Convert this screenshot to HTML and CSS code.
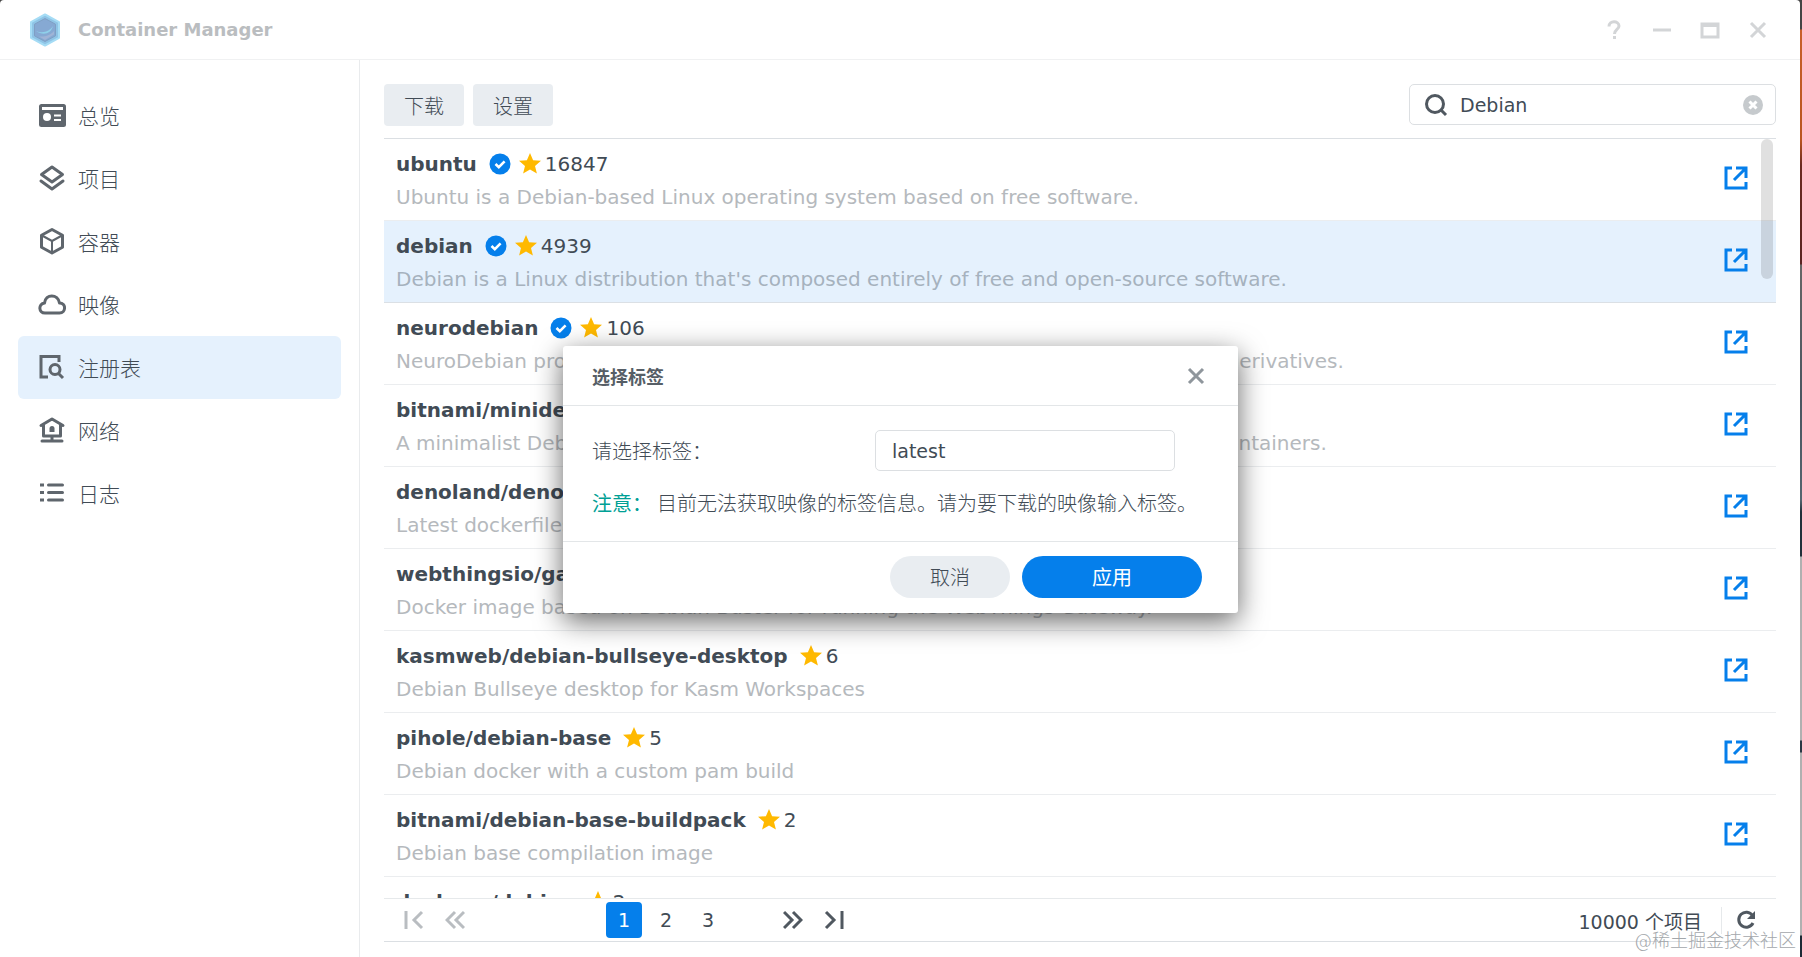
FILE: index.html
```html
<!DOCTYPE html>
<html lang="zh-CN">

<head>
    <meta charset="UTF-8">
    <meta name="viewport" content="width=device-width, initial-scale=1.0">
    <title>Container Manager</title>
    <link rel="stylesheet" href="styles.css">
</head>

<body>

    <!-- Shared icons -->
    <svg class="sprite" aria-hidden="true">
        <symbol id="verified" viewBox="0 0 22 22">
            <circle cx="11" cy="11" r="10.5" fill="#057feb" />
            <path d="M6.5 11l3.3 3.2 5.8-5.8" fill="none" stroke="#fff" stroke-width="2.6" />
        </symbol>
        <symbol id="star" viewBox="0 0 22 22">
            <path d="M11 0l3.1 7.2 7.9.6-6 5.1 1.9 7.6L11 16.600l-6.900 3.900L6 12.900 0 7.800l7.900-.6z" fill="#ffb900" />
        </symbol>
        <symbol id="open" viewBox="0 0 24 24">
            <path d="M8 2H2v20h20v-6M12 2h10v10M21 3L10 14" fill="none" stroke="#057feb" stroke-width="3" />
        </symbol>
    </svg>

    <div class="window">
        <header class="titlebar">
            <svg class="logo" viewBox="0 0 32 34">
                <path d="M16 1.500l14 7.700v15.600l-14 7.700L2 24.800V9.200z" fill="#8fc4e6" stroke="#a5dcf5" stroke-width="2" stroke-linejoin="round" />
                <path d="M16 5.500l10.500 5.700v11.600L16 28.500 5.500 22.800V11.200z" fill="#86a9d3" stroke="#7f9fc4" />
                <path d="M7 18c7 3 14 0 17-5-2 8-10 10-17 5z" fill="#8fd0ea" />
                <path d="M10 23.500c7 .5 12-2 15-5.500v3.500l-9 5.500z" fill="#a0b4d6" />
            </svg>
            <h1>Container Manager</h1>
            <div class="window-tools">
                <button aria-label="帮助"><svg viewBox="0 0 20 20"><path d="M5 6.500C5 0 15 .5 15 6c0 3.500-4.500 3.500-4.500 8M10.500 16v3" /></svg></button>
                <button aria-label="最小化"><svg viewBox="0 0 20 20"><path d="M1 10h18" /></svg></button>
                <button aria-label="最大化"><svg viewBox="0 0 20 20"><path d="M2 4h16v13H2zM2 5.500h16" /></svg></button>
                <button aria-label="关闭"><svg viewBox="0 0 20 20"><path d="M3 3l14 14M17 3L3 17" /></svg></button>
            </div>
        </header>

        <div class="body">
            <nav class="sidebar">
                <a href="#"><svg viewBox="0 0 28 28"><rect x="1" y="3" width="27" height="23" rx="2.500" fill="#5f666d" /><path d="M4 7.500h21" stroke="#fff" stroke-width="3" /><circle cx="9" cy="16" r="4" fill="#fff" /><path d="M16 14.500h7M16 19h7" stroke="#fff" stroke-width="2" /></svg>总览</a>
                <a href="#"><svg viewBox="0 0 28 28"><path d="M14 3l10.500 7.500L14 18 3.500 10.500zM3 17l11 8 11-8" class="line" /></svg>项目</a>
                <a href="#"><svg viewBox="0 0 28 28"><path d="M14 2.500l10.500 5.700v12L14 26 3.500 20.200v-12z" class="line" /><path d="M4 8.500l10 5.500 10-5.500M14 14v12" class="line thin" /></svg>容器</a>
                <a href="#"><svg viewBox="0 0 28 28"><path d="M7 23c-6.500 0-7-9-.5-10C7.500 3.500 20 3.500 21.500 13c7 0 6.500 10 0 10z" class="line" /></svg>映像</a>
                <a href="#" class="active"><svg viewBox="0 0 28 28"><path d="M10 24H3V3.500h18V9" class="line sharp" /><circle cx="17" cy="16.500" r="5" class="line" /><path d="M20.500 20.500l4.500 4.500" class="line sharp" /></svg>注册表</a>
                <a href="#"><svg viewBox="0 0 28 28"><path d="M3 9.500L14 3l11 6.500M5.500 9v11h17V9M14 20v5M4 25h20" class="line" /><path d="M11.500 16v-3.500a2.500 2.500 0 0 1 5 0V16z" fill="#5f666d" /></svg>网络</a>
                <a href="#"><svg viewBox="0 0 28 28"><path d="M2 6h4M2 13.500h4M2 21h4" class="line sharp" /><path d="M10.500 6h14M10.500 13.500h14M10.500 21h14" class="line" /></svg>日志</a>
            </nav>

            <main class="content">
                <div class="toolbar">
                    <button class="btn">下载</button>
                    <button class="btn">设置</button>
                    <div class="search">
                        <svg viewBox="0 0 24 24"><circle cx="11" cy="11" r="8.500" /><path d="M17 17l5 5" /></svg>
                        <input type="text" aria-label="搜索" value="Debian">
                        <button aria-label="清除"><svg viewBox="0 0 20 20"><circle cx="10" cy="10" r="10" stroke="none" /><path d="M6.500 6.500l7 7M13.500 6.500l-7 7" stroke="#fff" stroke-width="3" /></svg></button>
                    </div>
                </div>

                <div class="list-wrap">
                    <ul class="list">
                        <li>
                            <div class="info">
                                <h2>ubuntu <svg><use href="#verified" /></svg><svg><use href="#star" /></svg><span>16847</span></h2>
                                <p>Ubuntu is a Debian-based Linux operating system based on free software.</p>
                            </div>
                            <a href="#" aria-label="ubuntu"><svg><use href="#open" /></svg></a>
                        </li>
                        <li class="selected">
                            <div class="info">
                                <h2>debian <svg><use href="#verified" /></svg><svg><use href="#star" /></svg><span>4939</span></h2>
                                <p>Debian is a Linux distribution that's composed entirely of free and open-source software.</p>
                            </div>
                            <a href="#" aria-label="debian"><svg><use href="#open" /></svg></a>
                        </li>
                        <li>
                            <div class="info">
                                <h2>neurodebian <svg><use href="#verified" /></svg><svg><use href="#star" /></svg><span>106</span></h2>
                                <p>NeuroDebian provides neuroscience research software for Debian, Ubuntu, and all derivatives.</p>
                            </div>
                            <a href="#" aria-label="neurodebian"><svg><use href="#open" /></svg></a>
                        </li>
                        <li>
                            <div class="info">
                                <h2>bitnami/minideb</h2>
                                <p>A minimalist Debian-based image built specifically to be used as a base image in containers.</p>
                            </div>
                            <a href="#" aria-label="bitnami/minideb"><svg><use href="#open" /></svg></a>
                        </li>
                        <li>
                            <div class="info">
                                <h2>denoland/deno</h2>
                                <p>Latest dockerfiles and images for Deno</p>
                            </div>
                            <a href="#" aria-label="denoland/deno"><svg><use href="#open" /></svg></a>
                        </li>
                        <li>
                            <div class="info">
                                <h2>webthingsio/gateway</h2>
                                <p>Docker image based on Debian Buster for running the WebThings Gateway.</p>
                            </div>
                            <a href="#" aria-label="webthingsio/gateway"><svg><use href="#open" /></svg></a>
                        </li>
                        <li>
                            <div class="info">
                                <h2>kasmweb/debian-bullseye-desktop <svg><use href="#star" /></svg><span>6</span></h2>
                                <p>Debian Bullseye desktop for Kasm Workspaces</p>
                            </div>
                            <a href="#" aria-label="kasmweb/debian-bullseye-desktop"><svg><use href="#open" /></svg></a>
                        </li>
                        <li>
                            <div class="info">
                                <h2>pihole/debian-base <svg><use href="#star" /></svg><span>5</span></h2>
                                <p>Debian docker with a custom pam build</p>
                            </div>
                            <a href="#" aria-label="pihole/debian-base"><svg><use href="#open" /></svg></a>
                        </li>
                        <li>
                            <div class="info">
                                <h2>bitnami/debian-base-buildpack <svg><use href="#star" /></svg><span>2</span></h2>
                                <p>Debian base compilation image</p>
                            </div>
                            <a href="#" aria-label="bitnami/debian-base-buildpack"><svg><use href="#open" /></svg></a>
                        </li>
                        <li>
                            <div class="info">
                                <h2>dockage/debian <svg><use href="#star" /></svg><span>2</span></h2>
                            </div>
                        </li>
                    </ul>
                    <div class="scroll-thumb"></div>
                </div>

                <footer class="pager">
                    <button class="off" aria-label="第一页"><svg viewBox="0 0 20 20"><path d="M2 1v18M18 2l-8 8 8 8" /></svg></button>
                    <button class="off" aria-label="上一页"><svg viewBox="0 0 20 20"><path d="M10 2l-8 8 8 8M19 2l-8 8 8 8" /></svg></button>
                    <div class="pages">
                        <button class="current">1</button>
                        <button>2</button>
                        <button>3</button>
                    </div>
                    <button aria-label="下一页"><svg viewBox="0 0 20 20"><path d="M1 2l8 8-8 8M10 2l8 8-8 8" /></svg></button>
                    <button aria-label="最后一页"><svg viewBox="0 0 20 20"><path d="M2 2l8 8-8 8M18 1v18" /></svg></button>
                    <span class="total">10000 个项目</span>
                    <button class="refresh" aria-label="刷新"><svg viewBox="0 0 20 20"><path d="M16.500 5.500A7.500 7.500 0 1 0 17 13" /><path d="M19 1v8h-8z" class="head" /></svg></button>
                </footer>
            </main>
        </div>
    </div>

    <div class="dialog" role="dialog" aria-labelledby="dialog-title">
        <div class="dialog-head">
            <h2 id="dialog-title">选择标签</h2>
            <button aria-label="关闭"><svg viewBox="0 0 20 20"><path d="M3 3l14 14M17 3L3 17" /></svg></button>
        </div>
        <div class="dialog-body">
            <div class="field">
                <label for="tag">请选择标签：</label>
                <input type="text" id="tag" value="latest">
            </div>
            <p><span class="note">注意：</span>目前无法获取映像的标签信息。请为要下载的映像输入标签。</p>
        </div>
        <div class="dialog-foot">
            <button class="cancel">取消</button>
            <button class="apply">应用</button>
        </div>
    </div>

    <div class="watermark">@稀土掘金技术社区</div>

</body>

</html>
```
FILE: styles.css
```css
* {
    box-sizing: border-box;
}

body {
    margin: 0;
    font-family: "DejaVu Sans", "Noto Sans CJK SC", sans-serif;
    font-size: 19px;
    color: #414b55;
    background: linear-gradient(#444 29px, #c8602a 30px, #b9551f 140px, #6b2a20 165px, #5a2422 264px, #666 265px, #4a5560 400px, #55656f 500px, #22303a 512px, #22303a 556px, #b0b0b0 557px, #b0b0b0 740px, #2a3844 741px, #2a3844 752px, #b0b0b0 753px, #b0b0b0 935px, #1c2a35 936px);
}

h1,
h2,
p,
ul {
    margin: 0;
    padding: 0;
}

button {
    padding: 0;
    border: none;
    background: none;
    font: inherit;
    color: inherit;
    cursor: pointer;
}

svg {
    display: block;
    flex: none;
}

input {
    min-width: 0;
    font: inherit;
    color: inherit;
}

.sprite {
    position: absolute;
    width: 0;
    height: 0;
}

.window {
    display: flex;
    flex-direction: column;
    height: 100vh;
    margin-right: 2px;
    background-color: #fff;
    border-radius: 4px 4px 0 0;
    overflow: hidden;
}

.titlebar {
    display: flex;
    align-items: center;
    flex: none;
    height: 60px;
    padding: 0 32px 0 29px;
    border-bottom: 1px solid #f0f1f2;
}

.logo {
    width: 32px;
    height: 34px;
    margin-right: 17px;
}

.titlebar h1 {
    font-size: 18px;
    color: #babdc0;
}

.window-tools {
    display: flex;
    gap: 28px;
    margin-left: auto;
}

.window-tools svg,
.dialog-head svg {
    width: 20px;
    height: 20px;
    fill: none;
    stroke: #d3d5d7;
    stroke-width: 3;
}

.body {
    display: flex;
    flex: 1;
    min-height: 0;
}

/* Sidebar */
.sidebar {
    flex: none;
    width: 360px;
    padding: 24px 18px;
    border-right: 1px solid #e9ebed;
}

.sidebar a {
    display: flex;
    align-items: center;
    gap: 12px;
    height: 63px;
    padding: 0 0 2px 20px;
    border-radius: 6px;
    font-size: 21px;
    font-weight: 300;
    color: #414b55;
    text-decoration: none;
}

.sidebar .active {
    background-color: #e5f1fd;
}

.sidebar svg {
    width: 28px;
    height: 28px;
}

.line {
    fill: none;
    stroke: #5f666d;
    stroke-width: 3;
    stroke-linecap: round;
    stroke-linejoin: round;
}

.line.thin {
    stroke-width: 2;
}

.line.sharp {
    stroke-linecap: butt;
    stroke-linejoin: miter;
}

/* Image list */
.content {
    display: flex;
    flex-direction: column;
    flex: 1;
    min-width: 0;
    padding: 24px 24px 15px;
}

.toolbar {
    display: flex;
    gap: 9px;
    flex: none;
    height: 54px;
}

.btn {
    width: 80px;
    height: 42px;
    border-radius: 4px;
    background-color: #e9edf1;
    font-size: 20px;
    font-weight: 300;
}

.search {
    display: flex;
    align-items: center;
    gap: 12px;
    width: 367px;
    height: 41px;
    margin-left: auto;
    padding: 0 12px 0 14px;
    border: 1px solid #dcdfe2;
    border-radius: 5px;
}

.search > svg {
    width: 24px;
    height: 24px;
    fill: none;
    stroke: #505860;
    stroke-width: 3;
}

.search input {
    flex: 1;
    padding: 0;
    border: none;
    outline: none;
}

.search button svg {
    width: 20px;
    height: 20px;
    fill: #c6cacd;
}

.list-wrap {
    position: relative;
    flex: 1;
    min-height: 0;
    overflow: hidden;
    border-top: 1px solid #dbdfe3;
}

.list {
    list-style: none;
}

.list li {
    display: flex;
    align-items: center;
    justify-content: space-between;
    height: 82px;
    padding: 0 28px 3px 12px;
    border-bottom: 1px solid #ebedef;
}

.list .selected {
    background-color: #e5f1fd;
    border-color: #dbe0e5;
}

.info {
    display: flex;
    flex-direction: column;
    height: 100%;
    padding-top: 9px;
}

.info h2 {
    display: flex;
    align-items: center;
    height: 32px;
    font-size: 20px;
}

.info h2 svg {
    width: 22px;
    height: 22px;
    margin-left: 8px;
}

.info h2 svg:first-of-type {
    margin-left: 12px;
}

.info h2 span {
    margin-left: 4px;
    font-weight: normal;
}

.info p {
    font-size: 20px;
    line-height: 34px;
    color: #b5b9bd;
}

.selected .info p {
    color: #a6b2be;
}

.list a svg {
    width: 24px;
    height: 24px;
}

.scroll-thumb {
    position: absolute;
    top: 0;
    right: 3px;
    width: 12px;
    height: 140px;
    border-radius: 6px;
    background-color: rgba(0, 0, 0, 0.12);
}

/* Paging */
.pager {
    display: flex;
    align-items: center;
    flex: none;
    height: 44px;
    padding: 0 20px;
    border-top: 1px solid #e6e9eb;
    border-bottom: 1px solid #dbdfe3;
}

.pager svg {
    width: 20px;
    height: 20px;
    fill: none;
    stroke: #505860;
    stroke-width: 3;
}

.pager > button {
    margin-right: 21px;
}

.pager .off svg {
    stroke: #b9bdc1;
}

.pages {
    display: flex;
    gap: 6px;
    margin: 0 57px 0 120px;
}

.pages button {
    width: 36px;
    height: 36px;
    border-radius: 4px;
}

.pages .current {
    background-color: #057feb;
    color: #fff;
}

.total {
    margin-left: auto;
    padding-right: 19px;
    border-right: 1px solid #e6e9eb;
}

.pager .refresh {
    margin: 0 0 0 14px;
}

.refresh .head {
    fill: #505860;
    stroke: none;
}

/* Dialog */
.dialog {
    position: absolute;
    top: 346px;
    left: calc(50% - 338px);
    width: 675px;
    border-radius: 3px;
    background-color: #fff;
    box-shadow: 0 8px 28px rgba(0, 0, 0, 0.6);
}

.dialog-head {
    display: flex;
    align-items: center;
    justify-content: space-between;
    height: 60px;
    padding: 0 32px 0 29px;
    border-bottom: 1px solid #e3e6e8;
}

.dialog-head h2 {
    font-size: 18px;
    color: #565e66;
}

.dialog-head svg {
    stroke: #8f969c;
}

.dialog-body {
    height: 135px;
    padding: 24px 29px 0;
    font-size: 20px;
    font-weight: 300;
}

.field {
    display: flex;
    align-items: center;
    justify-content: space-between;
    padding-right: 34px;
}

.field input {
    width: 300px;
    height: 41px;
    padding: 0 16px;
    border: 1px solid #dcdfe2;
    border-radius: 5px;
    font-size: 19px;
    font-weight: normal;
}

.dialog-body p {
    margin-top: 18px;
    line-height: 30px;
    white-space: nowrap;
}

.note {
    margin-right: 5px;
    font-weight: normal;
    color: #00a095;
}

.dialog-foot {
    display: flex;
    justify-content: flex-end;
    gap: 12px;
    padding: 14px 36px 15px;
    border-top: 1px solid #e3e6e8;
}

.dialog-foot button {
    width: 120px;
    height: 42px;
    padding-bottom: 2px;
    border-radius: 21px;
    background-color: #e9edf1;
    font-size: 20px;
    font-weight: 300;
}

.dialog-foot .apply {
    width: 180px;
    background-color: #057feb;
    font-weight: normal;
    color: #fff;
}

.watermark {
    position: absolute;
    right: 6px;
    bottom: 5px;
    font-size: 18px;
    font-weight: 300;
    color: #a3a7ab;
}
```
